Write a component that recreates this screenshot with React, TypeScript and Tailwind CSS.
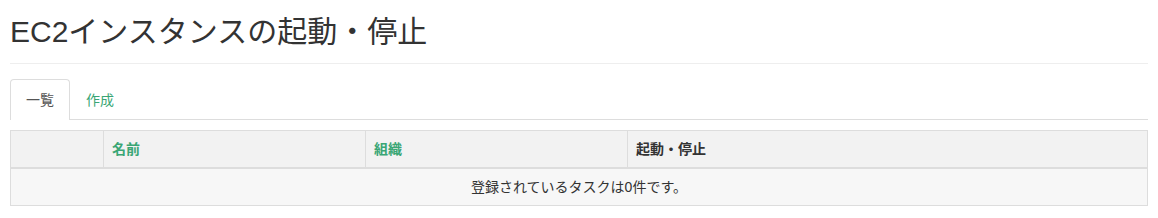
import React from "react";

export default function App() {
  return (
    <div
      className="w-[1158px] bg-white px-[10px] text-[14px] text-[#333]"
      style={{ fontFamily: '"Liberation Sans", "Noto Sans CJK JP", sans-serif' }}
    >
      <div className="border-b border-[#eee] pb-[15px] pt-[15px]">
        <h1 className="text-[30px] leading-[33px] font-normal text-[#333]">EC2インスタンスの起動・停止</h1>
      </div>
      <div className="mt-[15px] flex border-b border-[#ddd]">
        <div className="-mb-px rounded-t-[4px] border border-b-0 border-[#ddd] bg-white px-[15px] py-[10px] leading-[20px] text-[#555]">
          一覧
        </div>
        <div className="-mb-px border border-b-0 border-transparent px-[15px] py-[10px] leading-[20px] text-[#3aa675]">作成</div>
      </div>
      <table className="mt-[10px] w-full border-collapse border border-[#ddd]">
        <thead>
          <tr className="bg-[#f2f2f2]">
            <th className="w-[93px] border border-b-2 border-[#ddd] p-[8px] text-left leading-[20px]"></th>
            <th className="w-[262px] border border-b-2 border-[#ddd] p-[8px] text-left leading-[20px] font-bold text-[#3aa675]">名前</th>
            <th className="w-[262px] border border-b-2 border-[#ddd] p-[8px] text-left leading-[20px] font-bold text-[#3aa675]">組織</th>
            <th className="border border-b-2 border-[#ddd] p-[8px] text-left leading-[20px] font-bold text-[#333]">起動・停止</th>
          </tr>
        </thead>
        <tbody>
          <tr className="bg-[#f7f7f7]">
            <td colSpan={4} className="border border-[#ddd] p-[8px] text-center leading-[20px]">
              登録されているタスクは0件です。
            </td>
          </tr>
        </tbody>
      </table>
    </div>
  );
}
